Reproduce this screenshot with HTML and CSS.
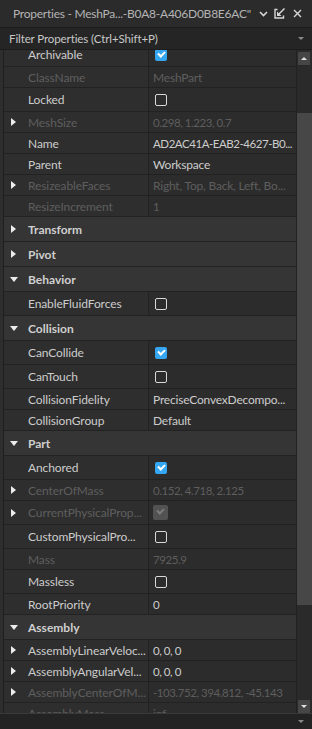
FILE: index.html
```html
<!DOCTYPE html>
<html lang="en">

<head>
    <meta charset="UTF-8">
    <meta name="viewport" content="width=device-width, initial-scale=1.0">
    <title>Properties</title>
    <link rel="stylesheet" href="styles.css">
</head>

<body>
    <div class="panel">
        <div class="titlebar">
            <span class="title">Properties - MeshPa...-B0A8-A406D0B8E6AC"</span>
            <div class="title-icons">
                <svg class="ic-chevron" width="9" height="6" viewBox="0 0 9 6"><path d="M1 1 L4.5 4.5 L8 1" fill="none" stroke="#d6d6d6" stroke-width="1.6"/></svg>
                <svg class="ic-float" width="11" height="11" viewBox="0 0 11 11"><path d="M3.5 1.5 H1 V10 H9.5 V7.5" fill="none" stroke="#d6d6d6" stroke-width="1.4"/><path d="M10.5 0.5 L5 6" stroke="#d6d6d6" stroke-width="1.5"/><path d="M3 3.5 V8 H7.5 Z" fill="#d6d6d6"/></svg>
                <svg class="ic-close" width="9" height="9" viewBox="0 0 9 9"><path d="M1 1 L8 8 M8 1 L1 8" stroke="#d6d6d6" stroke-width="1.4"/></svg>
            </div>
        </div>

        <div class="filter">
            <span>Filter Properties (Ctrl+Shift+P)</span>
            <span class="drop"></span>
        </div>

        <div class="body">
            <div class="viewport">
                <div class="list">
                    <div class="row tall"><div class="name"><span class="caret"></span>Archivable</div><div class="value"><span class="check on"></span></div></div>
                    <div class="row off"><div class="name"><span class="caret"></span>ClassName</div><div class="value">MeshPart</div></div>
                    <div class="row tall"><div class="name"><span class="caret"></span>Locked</div><div class="value"><span class="check"></span></div></div>
                    <div class="row off"><div class="name"><span class="caret"><i class="tri-r"></i></span>MeshSize</div><div class="value num">0.298, 1.223, 0.7</div></div>
                    <div class="row"><div class="name"><span class="caret"></span>Name</div><div class="value num">AD2AC41A-EAB2-4627-B0...</div></div>
                    <div class="row"><div class="name"><span class="caret"></span>Parent</div><div class="value">Workspace</div></div>
                    <div class="row off"><div class="name"><span class="caret"><i class="tri-r"></i></span>ResizeableFaces</div><div class="value">Right, Top, Back, Left, Bo...</div></div>
                    <div class="row off"><div class="name"><span class="caret"></span>ResizeIncrement</div><div class="value num">1</div></div>

                    <div class="section"><span class="caret"><i class="tri-r"></i></span>Transform</div>
                    <div class="section"><span class="caret"><i class="tri-r"></i></span>Pivot</div>
                    <div class="section"><span class="caret"><i class="tri-d"></i></span>Behavior</div>
                    <div class="row tall"><div class="name"><span class="caret"></span>EnableFluidForces</div><div class="value"><span class="check"></span></div></div>

                    <div class="section"><span class="caret"><i class="tri-d"></i></span>Collision</div>
                    <div class="row tall"><div class="name"><span class="caret"></span>CanCollide</div><div class="value"><span class="check on"></span></div></div>
                    <div class="row tall"><div class="name"><span class="caret"></span>CanTouch</div><div class="value"><span class="check"></span></div></div>
                    <div class="row"><div class="name"><span class="caret"></span>CollisionFidelity</div><div class="value">PreciseConvexDecompo...</div></div>
                    <div class="row"><div class="name"><span class="caret"></span>CollisionGroup</div><div class="value">Default</div></div>

                    <div class="section"><span class="caret"><i class="tri-d"></i></span>Part</div>
                    <div class="row tall"><div class="name"><span class="caret"></span>Anchored</div><div class="value"><span class="check on"></span></div></div>
                    <div class="row off"><div class="name"><span class="caret"><i class="tri-r"></i></span>CenterOfMass</div><div class="value num">0.152, 4.718, 2.125</div></div>
                    <div class="row tall off"><div class="name"><span class="caret"><i class="tri-r"></i></span>CurrentPhysicalProp...</div><div class="value"><span class="check dim"></span></div></div>
                    <div class="row tall"><div class="name"><span class="caret"></span>CustomPhysicalPro...</div><div class="value"><span class="check"></span></div></div>
                    <div class="row off"><div class="name"><span class="caret"></span>Mass</div><div class="value num">7925.9</div></div>
                    <div class="row tall"><div class="name"><span class="caret"></span>Massless</div><div class="value"><span class="check"></span></div></div>
                    <div class="row"><div class="name"><span class="caret"></span>RootPriority</div><div class="value num">0</div></div>

                    <div class="section"><span class="caret"><i class="tri-d"></i></span>Assembly</div>
                    <div class="row"><div class="name"><span class="caret"><i class="tri-r"></i></span>AssemblyLinearVeloc...</div><div class="value num">0, 0, 0</div></div>
                    <div class="row"><div class="name"><span class="caret"><i class="tri-r"></i></span>AssemblyAngularVel...</div><div class="value num">0, 0, 0</div></div>
                    <div class="row off"><div class="name"><span class="caret"><i class="tri-r"></i></span>AssemblyCenterOfM...</div><div class="value num">-103.752, 394.812, -45.143</div></div>
                    <div class="row off"><div class="name"><span class="caret"></span>AssemblyMass</div><div class="value">inf</div></div>
                </div>
            </div>

            <div class="scrollbar">
                <div class="sb-btn"><i class="sb-up"></i></div>
                <div class="sb-track"><div class="sb-thumb"></div></div>
                <div class="sb-btn"><i class="sb-down"></i></div>
            </div>
        </div>

        <div class="statusbar">
            <span class="drop"></span>
        </div>
    </div>
</body>

</html>
```

FILE: styles.css
```css
body {
    margin: 0;
    background: #2e2e2e;
    font-family: 'Lato', 'Liberation Sans', sans-serif;
    font-size: 12px;
    color: #cccccc;
}

.panel {
    width: 312px;
    height: 729px;
    display: flex;
    flex-direction: column;
    overflow: hidden;
}

/* title bar */
.titlebar {
    height: 27px;
    flex: none;
    background: #2b2b2b;
    display: flex;
    align-items: center;
    padding-left: 13px;
    box-sizing: border-box;
}

.title {
    flex: 1;
    min-width: 0;
    font-size: 12px;
    letter-spacing: -0.25px;
    color: #b4b4b4;
    white-space: nowrap;
}

.title-icons {
    display: flex;
    align-items: center;
    margin-right: 10px;
}

.ic-chevron {
    margin-top: 1px;
    margin-right: 6px;
}

.ic-float {
    margin-right: 8px;
}

/* filter */
.filter {
    height: 21px;
    flex: none;
    background: #252525;
    border-top: 1px solid #1c1c1c;
    border-bottom: 1px solid #1c1c1c;
    display: flex;
    align-items: center;
    justify-content: space-between;
    padding: 0 8px 0 9px;
    font-size: 11.5px;
    letter-spacing: -0.1px;
    color: #c8c8c8;
}

.drop {
    width: 0;
    height: 0;
    border-left: 3px solid transparent;
    border-right: 3px solid transparent;
    border-top: 3px solid #8a8a8a;
}

/* list */
.body {
    flex: 1;
    display: flex;
    min-height: 0;
}

.viewport {
    flex: 1;
    overflow: hidden;
    margin-left: 3px;
    border-left: 1px solid #1f1f1f;
}

.list {
    margin-top: -7px;
}

.row {
    display: flex;
    height: 21px;
    box-sizing: border-box;
    border-bottom: 1px solid #222222;
    background: #2e2e2e;
}

.row.tall {
    height: 24px;
}

.name {
    width: 145px;
    flex: none;
    display: flex;
    align-items: center;
    padding-left: 7px;
    box-sizing: border-box;
    border-right: 1px solid #222222;
    white-space: nowrap;
    overflow: hidden;
    letter-spacing: -0.1px;
}

.value {
    flex: 1;
    display: flex;
    align-items: center;
    padding-left: 4px;
    white-space: nowrap;
    overflow: hidden;
    background: #2c2c2c;
    letter-spacing: -0.2px;
}

.value.num {
    font-size: 11.5px;
    letter-spacing: -0.45px;
}

.row.off .name,
.row.off .value {
    color: #5e5e5e;
}

.caret {
    width: 17px;
    flex: none;
    display: flex;
    align-items: center;
}

.tri-r {
    width: 0;
    height: 0;
    border-top: 4px solid transparent;
    border-bottom: 4px solid transparent;
    border-left: 5px solid #ececec;
}

.tri-d {
    width: 0;
    height: 0;
    border-left: 4px solid transparent;
    border-right: 4px solid transparent;
    border-top: 5px solid #ececec;
    margin-left: -1px;
}

.section {
    height: 25px;
    box-sizing: border-box;
    border-bottom: 1px solid #222222;
    background: #353535;
    display: flex;
    align-items: center;
    padding-left: 7px;
    font-weight: bold;
    color: #cfcfcf;
}

/* checkboxes */
.check {
    width: 12px;
    height: 12px;
    margin-left: 2px;
    box-sizing: border-box;
    border: 1px solid #d8d8d8;
    border-radius: 2px;
    position: relative;
}

.check.on {
    border: none;
    background: #35a6f2;
}

.check.on::after,
.check.dim::after {
    content: '';
    position: absolute;
    left: 3px;
    top: 2px;
    width: 5px;
    height: 3px;
    border-left: 2px solid #ffffff;
    border-bottom: 2px solid #ffffff;
    transform: rotate(-45deg);
}

.check.dim {
    width: 15px;
    height: 15px;
    margin-left: 0;
    border: none;
    border-radius: 2px;
    background: #525252;
}

.check.dim::after {
    left: 4px;
    top: 3px;
    border-color: #7c7c7c;
}

/* scrollbar */
.scrollbar {
    width: 16px;
    flex: none;
    display: flex;
    flex-direction: column;
    border-left: 1px solid #222222;
    box-sizing: border-box;
    background: #2a2a2a;
    padding-top: 2px;
}

.sb-btn {
    height: 13px;
    width: 12px;
    margin-left: 1px;
    background: #464646;
    display: flex;
    align-items: center;
    justify-content: center;
}

.sb-up {
    width: 0;
    height: 0;
    border-left: 3px solid transparent;
    border-right: 3px solid transparent;
    border-bottom: 3px solid #e0e0e0;
}

.sb-down {
    width: 0;
    height: 0;
    border-left: 3px solid transparent;
    border-right: 3px solid transparent;
    border-top: 3px solid #e0e0e0;
}

.sb-track {
    flex: 1;
    padding-top: 48px;
    padding-bottom: 95px;
    display: flex;
    flex-direction: column;
}

.sb-thumb {
    flex: 1;
    background: #474747;
}

/* status bar */
.statusbar {
    height: 16px;
    flex: none;
    box-sizing: border-box;
    background: #232323;
    border-top: 1px solid #3a3a3a;
    display: flex;
    align-items: center;
    justify-content: flex-end;
    padding-right: 8px;
}
```
